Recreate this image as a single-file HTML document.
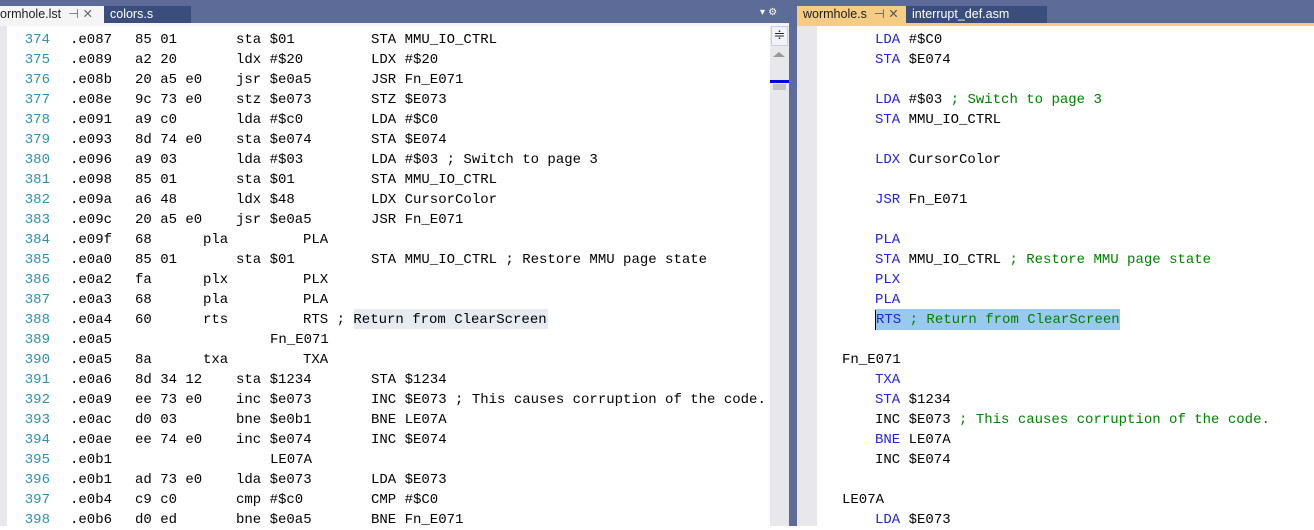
<!DOCTYPE html>
<html><head><meta charset="utf-8"><style>
*{margin:0;padding:0;box-sizing:border-box}
body{width:1314px;height:526px;overflow:hidden;background:#fff;position:relative;font-family:"Liberation Mono",monospace;font-size:14px;color:#000}
.w{position:absolute;left:0;top:2px;width:1314px;height:526px}
.a{position:absolute;white-space:pre;line-height:20px;height:20px}
.n{color:#2b91af;width:50px;text-align:right;left:0}
.k{color:#2222dd}
.c{color:#008000}
.tab{position:absolute;top:6px;height:17px;font-family:"Liberation Sans",sans-serif;font-size:12.5px;line-height:17px;padding-left:6px;white-space:pre}
</style></head><body>
<div style="position:absolute;left:0;top:0;width:1314px;height:25px;background:#5d6b99"></div>
<div style="position:absolute;left:0;top:23px;width:789px;height:3px;background:#f5f5f5"></div>
<div class="tab" style="left:-6px;width:110px;background:#f5f5f5;color:#1e1e1e">ormhole.lst  <span style="color:#666">⊣ ✕</span></div>
<div class="tab" style="left:104px;width:87px;background:#3b4d7c;color:#fff">colors.s</div>
<div style="position:absolute;left:760px;top:7px;color:#fff;font-size:10px;font-family:'DejaVu Sans'">▾ ⚙</div>
<div style="position:absolute;left:797px;top:23px;width:517px;height:3px;background:#f5cc84"></div>
<div class="tab" style="left:797px;width:110px;background:#f5cc84;color:#1e1e1e">wormhole.s  <span style="color:#555">⊣ ✕</span></div>
<div class="tab" style="left:906px;width:141px;background:#3b4d7c;color:#fff">interrupt_def.asm</div>
<div style="position:absolute;left:0;top:26px;width:7px;height:500px;background:#e8e8ec"></div>
<div style="position:absolute;left:770px;top:26px;width:19px;height:500px;background:#e8e8ec"></div>
<div style="position:absolute;left:771px;top:26px;width:17px;height:20px;background:#f0f4fa;border:1px solid #c5cfe6;color:#222;font-size:14px;text-align:center;line-height:18px">≑</div>
<div style="position:absolute;left:773px;top:52px;width:0;height:0;border-left:6px solid transparent;border-right:6px solid transparent;border-bottom:5px solid #999"></div>
<div style="position:absolute;left:770px;top:80px;width:19px;height:3px;background:#0000e0"></div>
<div style="position:absolute;left:773px;top:84px;width:13px;height:6px;background:#c2c3c9"></div>
<div style="position:absolute;left:789px;top:25px;width:8px;height:501px;background:#5d6b99"></div>
<div style="position:absolute;left:797px;top:26px;width:20px;height:500px;background:#e8e8ec"></div>
<div style="position:absolute;left:354px;top:309px;width:194px;height:20px;background:#e6ebf1"></div>
<div style="position:absolute;left:875px;top:309px;width:245px;height:21px;background:#99c9ef"></div>
<div class="w">
<div class="a n" style="top:28px">374</div><div class="a" style="top:28px;left:70px">.e087</div><div class="a" style="top:28px;left:135px">85 01</div><div class="a" style="top:28px;left:236px">sta $01</div><div class="a" style="top:28px;left:371px">STA MMU_IO_CTRL</div>
<div class="a n" style="top:48px">375</div><div class="a" style="top:48px;left:70px">.e089</div><div class="a" style="top:48px;left:135px">a2 20</div><div class="a" style="top:48px;left:236px">ldx #$20</div><div class="a" style="top:48px;left:371px">LDX #$20</div>
<div class="a n" style="top:68px">376</div><div class="a" style="top:68px;left:70px">.e08b</div><div class="a" style="top:68px;left:135px">20 a5 e0</div><div class="a" style="top:68px;left:236px">jsr $e0a5</div><div class="a" style="top:68px;left:371px">JSR Fn_E071</div>
<div class="a n" style="top:88px">377</div><div class="a" style="top:88px;left:70px">.e08e</div><div class="a" style="top:88px;left:135px">9c 73 e0</div><div class="a" style="top:88px;left:236px">stz $e073</div><div class="a" style="top:88px;left:371px">STZ $E073</div>
<div class="a n" style="top:108px">378</div><div class="a" style="top:108px;left:70px">.e091</div><div class="a" style="top:108px;left:135px">a9 c0</div><div class="a" style="top:108px;left:236px">lda #$c0</div><div class="a" style="top:108px;left:371px">LDA #$C0</div>
<div class="a n" style="top:128px">379</div><div class="a" style="top:128px;left:70px">.e093</div><div class="a" style="top:128px;left:135px">8d 74 e0</div><div class="a" style="top:128px;left:236px">sta $e074</div><div class="a" style="top:128px;left:371px">STA $E074</div>
<div class="a n" style="top:148px">380</div><div class="a" style="top:148px;left:70px">.e096</div><div class="a" style="top:148px;left:135px">a9 03</div><div class="a" style="top:148px;left:236px">lda #$03</div><div class="a" style="top:148px;left:371px">LDA #$03 ; Switch to page 3</div>
<div class="a n" style="top:168px">381</div><div class="a" style="top:168px;left:70px">.e098</div><div class="a" style="top:168px;left:135px">85 01</div><div class="a" style="top:168px;left:236px">sta $01</div><div class="a" style="top:168px;left:371px">STA MMU_IO_CTRL</div>
<div class="a n" style="top:188px">382</div><div class="a" style="top:188px;left:70px">.e09a</div><div class="a" style="top:188px;left:135px">a6 48</div><div class="a" style="top:188px;left:236px">ldx $48</div><div class="a" style="top:188px;left:371px">LDX CursorColor</div>
<div class="a n" style="top:208px">383</div><div class="a" style="top:208px;left:70px">.e09c</div><div class="a" style="top:208px;left:135px">20 a5 e0</div><div class="a" style="top:208px;left:236px">jsr $e0a5</div><div class="a" style="top:208px;left:371px">JSR Fn_E071</div>
<div class="a n" style="top:228px">384</div><div class="a" style="top:228px;left:70px">.e09f</div><div class="a" style="top:228px;left:135px">68</div><div class="a" style="top:228px;left:203px">pla</div><div class="a" style="top:228px;left:303px">PLA</div>
<div class="a n" style="top:248px">385</div><div class="a" style="top:248px;left:70px">.e0a0</div><div class="a" style="top:248px;left:135px">85 01</div><div class="a" style="top:248px;left:236px">sta $01</div><div class="a" style="top:248px;left:371px">STA MMU_IO_CTRL ; Restore MMU page state</div>
<div class="a n" style="top:268px">386</div><div class="a" style="top:268px;left:70px">.e0a2</div><div class="a" style="top:268px;left:135px">fa</div><div class="a" style="top:268px;left:203px">plx</div><div class="a" style="top:268px;left:303px">PLX</div>
<div class="a n" style="top:288px">387</div><div class="a" style="top:288px;left:70px">.e0a3</div><div class="a" style="top:288px;left:135px">68</div><div class="a" style="top:288px;left:203px">pla</div><div class="a" style="top:288px;left:303px">PLA</div>
<div class="a n" style="top:308px">388</div><div class="a" style="top:308px;left:70px">.e0a4</div><div class="a" style="top:308px;left:135px">60</div><div class="a" style="top:308px;left:203px">rts</div><div class="a" style="top:308px;left:303px">RTS ; Return from ClearScreen</div>
<div class="a n" style="top:328px">389</div><div class="a" style="top:328px;left:70px">.e0a5</div><div class="a" style="top:328px;left:270px">Fn_E071</div>
<div class="a n" style="top:348px">390</div><div class="a" style="top:348px;left:70px">.e0a5</div><div class="a" style="top:348px;left:135px">8a</div><div class="a" style="top:348px;left:203px">txa</div><div class="a" style="top:348px;left:303px">TXA</div>
<div class="a n" style="top:368px">391</div><div class="a" style="top:368px;left:70px">.e0a6</div><div class="a" style="top:368px;left:135px">8d 34 12</div><div class="a" style="top:368px;left:236px">sta $1234</div><div class="a" style="top:368px;left:371px">STA $1234</div>
<div class="a n" style="top:388px">392</div><div class="a" style="top:388px;left:70px">.e0a9</div><div class="a" style="top:388px;left:135px">ee 73 e0</div><div class="a" style="top:388px;left:236px">inc $e073</div><div class="a" style="top:388px;left:371px">INC $E073 ; This causes corruption of the code.</div>
<div class="a n" style="top:408px">393</div><div class="a" style="top:408px;left:70px">.e0ac</div><div class="a" style="top:408px;left:135px">d0 03</div><div class="a" style="top:408px;left:236px">bne $e0b1</div><div class="a" style="top:408px;left:371px">BNE LE07A</div>
<div class="a n" style="top:428px">394</div><div class="a" style="top:428px;left:70px">.e0ae</div><div class="a" style="top:428px;left:135px">ee 74 e0</div><div class="a" style="top:428px;left:236px">inc $e074</div><div class="a" style="top:428px;left:371px">INC $E074</div>
<div class="a n" style="top:448px">395</div><div class="a" style="top:448px;left:70px">.e0b1</div><div class="a" style="top:448px;left:270px">LE07A</div>
<div class="a n" style="top:468px">396</div><div class="a" style="top:468px;left:70px">.e0b1</div><div class="a" style="top:468px;left:135px">ad 73 e0</div><div class="a" style="top:468px;left:236px">lda $e073</div><div class="a" style="top:468px;left:371px">LDA $E073</div>
<div class="a n" style="top:488px">397</div><div class="a" style="top:488px;left:70px">.e0b4</div><div class="a" style="top:488px;left:135px">c9 c0</div><div class="a" style="top:488px;left:236px">cmp #$c0</div><div class="a" style="top:488px;left:371px">CMP #$C0</div>
<div class="a n" style="top:508px">398</div><div class="a" style="top:508px;left:70px">.e0b6</div><div class="a" style="top:508px;left:135px">d0 ed</div><div class="a" style="top:508px;left:236px">bne $e0a5</div><div class="a" style="top:508px;left:371px">BNE Fn_E071</div>

<div class="a" style="top:28px;left:875px"><span class="k">LDA</span> #$C0</div>
<div class="a" style="top:48px;left:875px"><span class="k">STA</span> $E074</div>
<div class="a" style="top:88px;left:875px"><span class="k">LDA</span> #$03 <span class="c">; Switch to page 3</span></div>
<div class="a" style="top:108px;left:875px"><span class="k">STA</span> MMU_IO_CTRL</div>
<div class="a" style="top:148px;left:875px"><span class="k">LDX</span> CursorColor</div>
<div class="a" style="top:188px;left:875px"><span class="k">JSR</span> Fn_E071</div>
<div class="a" style="top:228px;left:875px"><span class="k">PLA</span></div>
<div class="a" style="top:248px;left:875px"><span class="k">STA</span> MMU_IO_CTRL <span class="c">; Restore MMU page state</span></div>
<div class="a" style="top:268px;left:875px"><span class="k">PLX</span></div>
<div class="a" style="top:288px;left:875px"><span class="k">PLA</span></div>
<div class="a" style="top:308px;left:875px;border-left:1px solid #000"><span class="k">RTS</span> <span class="c">; Return from ClearScreen</span></div>
<div class="a" style="top:348px;left:842px">Fn_E071</div>
<div class="a" style="top:368px;left:875px"><span class="k">TXA</span></div>
<div class="a" style="top:388px;left:875px"><span class="k">STA</span> $1234</div>
<div class="a" style="top:408px;left:875px">INC $E073 <span class="c">; This causes corruption of the code.</span></div>
<div class="a" style="top:428px;left:875px"><span class="k">BNE</span> LE07A</div>
<div class="a" style="top:448px;left:875px">INC $E074</div>
<div class="a" style="top:488px;left:842px">LE07A</div>
<div class="a" style="top:508px;left:875px"><span class="k">LDA</span> $E073</div>
</div>
</body></html>
